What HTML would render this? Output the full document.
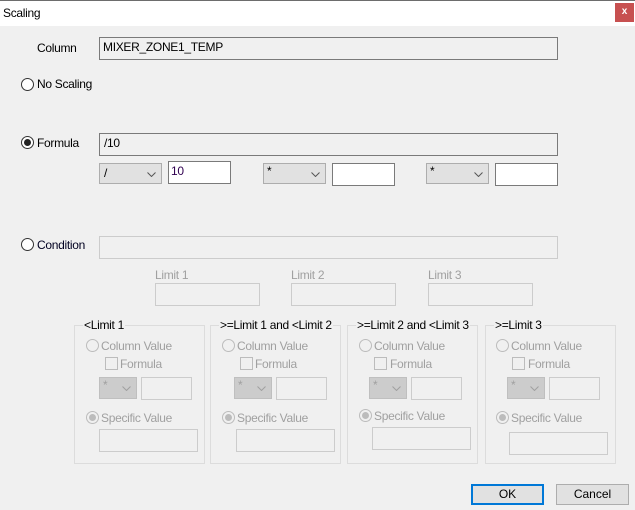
<!DOCTYPE html>
<html><head><style>
*{margin:0;padding:0;box-sizing:border-box}
body{width:635px;height:510px;background:#f0f0f0;font-family:"Liberation Sans",sans-serif;font-size:12px;position:relative;overflow:hidden;color:#000}
.a{position:absolute}
.t{position:absolute;white-space:nowrap;line-height:14px;letter-spacing:-0.3px}
.dis{color:#a0a0a0}
.box{position:absolute;border:1px solid #7a7a7a;background:#f0f0f0}
.dbox{position:absolute;border:1px solid #cccccc;background:#f0f0f0}
.wbox{position:absolute;border:1px solid #7a7a7a;background:#fff}
.combo{position:absolute;border:1px solid #adadad;background:#e1e1e1}
.dcombo{position:absolute;border:1px solid #bfbfbf;background:#cccccc}
.radio{position:absolute;width:13px;height:13px;border-radius:50%;border:1px solid #333;background:#fff}
.dradio{position:absolute;width:13px;height:13px;border-radius:50%;border:1px solid #bcbcbc;background:#f0f0f0}
.chk{position:absolute;width:13px;height:13px;border:1px solid #bcbcbc;background:#f0f0f0}
.grp{position:absolute;border:1px solid #dcdcdc}
.gt{position:absolute;top:-8px;left:8px;background:#f0f0f0;padding:0 1px;line-height:14px;white-space:nowrap;letter-spacing:-0.3px}
svg.ch{position:absolute;width:9px;height:5px}
</style></head><body>
<div class="a" style="left:0;top:0;width:635px;height:26px;background:#fff;border-top:1px solid #6d6d6d"></div>
<div class="t" style="left:3px;top:6px">Scaling</div>
<div class="a" style="left:615px;top:3px;width:19px;height:19px;background:#c75050;color:#fff;font-weight:bold;font-size:10px;text-align:center;line-height:18px">x</div>

<div class="t" style="left:37px;top:41px">Column</div>
<div class="box" style="left:99px;top:37px;width:459px;height:23px"></div>
<div class="t" style="left:103px;top:40px">MIXER_ZONE1_TEMP</div>

<div class="radio" style="left:21px;top:78px"></div>
<div class="t" style="left:37px;top:77px">No Scaling</div>

<div class="radio" style="left:21px;top:136px"></div>
<div class="a" style="left:24px;top:139px;width:7px;height:7px;border-radius:50%;background:#222"></div>
<div class="t" style="left:37px;top:136px">Formula</div>
<div class="box" style="left:99px;top:133px;width:459px;height:23px"></div>
<div class="t" style="left:104px;top:136px">/10</div>

<div class="combo" style="left:99px;top:163px;width:63px;height:21px"></div>
<div class="t" style="left:104px;top:166px">/</div>
<svg class="ch" style="left:147px;top:172px" viewBox="0 0 9 5"><polyline points="0.5,0.5 4.5,4.5 8.5,0.5" fill="none" stroke="#555" stroke-width="1"/></svg>
<div class="wbox" style="left:168px;top:161px;width:63px;height:23px"></div>
<div class="t" style="left:171px;top:164px;color:#300050">10</div>
<div class="combo" style="left:263px;top:163px;width:63px;height:21px"></div>
<div class="t" style="left:267px;top:164px">*</div>
<svg class="ch" style="left:311px;top:172px" viewBox="0 0 9 5"><polyline points="0.5,0.5 4.5,4.5 8.5,0.5" fill="none" stroke="#555" stroke-width="1"/></svg>
<div class="wbox" style="left:332px;top:163px;width:63px;height:23px"></div>
<div class="combo" style="left:426px;top:163px;width:63px;height:21px"></div>
<div class="t" style="left:430px;top:164px">*</div>
<svg class="ch" style="left:474px;top:172px" viewBox="0 0 9 5"><polyline points="0.5,0.5 4.5,4.5 8.5,0.5" fill="none" stroke="#555" stroke-width="1"/></svg>
<div class="wbox" style="left:495px;top:163px;width:63px;height:23px"></div>

<div class="radio" style="left:21px;top:238px"></div>
<div class="t" style="left:37px;top:238px;color:#000020">Condition</div>
<div class="dbox" style="left:99px;top:236px;width:459px;height:23px"></div>

<div class="t dis" style="left:155px;top:268px">Limit 1</div>
<div class="dbox" style="left:155px;top:283px;width:105px;height:23px"></div>
<div class="t dis" style="left:291px;top:268px">Limit 2</div>
<div class="dbox" style="left:291px;top:283px;width:105px;height:23px"></div>
<div class="t dis" style="left:428px;top:268px">Limit 3</div>
<div class="dbox" style="left:428px;top:283px;width:105px;height:23px"></div>

<div class="grp" style="left:74px;top:325px;width:131px;height:139px"><div class="gt">&lt;Limit 1</div></div>
<div class="grp" style="left:210px;top:325px;width:131px;height:139px"><div class="gt">&gt;=Limit 1 and &lt;Limit 2</div></div>
<div class="grp" style="left:347px;top:325px;width:131px;height:139px"><div class="gt">&gt;=Limit 2 and &lt;Limit 3</div></div>
<div class="grp" style="left:485px;top:325px;width:131px;height:139px"><div class="gt">&gt;=Limit 3</div></div>

<div class="dradio" style="left:86px;top:339px"></div><div class="t dis" style="left:101px;top:339px">Column Value</div>
<div class="chk" style="left:105px;top:357px"></div><div class="t dis" style="left:120px;top:357px">Formula</div>
<div class="dcombo" style="left:99px;top:377px;width:38px;height:22px"></div><div class="t dis" style="left:103px;top:378px">*</div>
<svg class="ch" style="left:122px;top:386px" viewBox="0 0 9 5"><polyline points="0.5,0.5 4.5,4.5 8.5,0.5" fill="none" stroke="#a0a0a0" stroke-width="1"/></svg>
<div class="dbox" style="left:141px;top:377px;width:51px;height:23px"></div>
<div class="dradio" style="left:86px;top:411px"></div><div class="a" style="left:89px;top:414px;width:7px;height:7px;border-radius:50%;background:#bcbcbc"></div><div class="t dis" style="left:101px;top:411px">Specific Value</div>
<div class="dbox" style="left:99px;top:429px;width:99px;height:23px"></div>

<div class="dradio" style="left:222px;top:339px"></div><div class="t dis" style="left:237px;top:339px">Column Value</div>
<div class="chk" style="left:240px;top:357px"></div><div class="t dis" style="left:255px;top:357px">Formula</div>
<div class="dcombo" style="left:234px;top:377px;width:38px;height:22px"></div><div class="t dis" style="left:238px;top:378px">*</div>
<svg class="ch" style="left:257px;top:386px" viewBox="0 0 9 5"><polyline points="0.5,0.5 4.5,4.5 8.5,0.5" fill="none" stroke="#a0a0a0" stroke-width="1"/></svg>
<div class="dbox" style="left:276px;top:377px;width:51px;height:23px"></div>
<div class="dradio" style="left:222px;top:411px"></div><div class="a" style="left:225px;top:414px;width:7px;height:7px;border-radius:50%;background:#bcbcbc"></div><div class="t dis" style="left:237px;top:411px">Specific Value</div>
<div class="dbox" style="left:236px;top:429px;width:99px;height:23px"></div>

<div class="dradio" style="left:359px;top:339px"></div><div class="t dis" style="left:374px;top:339px">Column Value</div>
<div class="chk" style="left:374px;top:357px"></div><div class="t dis" style="left:390px;top:357px">Formula</div>
<div class="dcombo" style="left:369px;top:377px;width:38px;height:22px"></div><div class="t dis" style="left:373px;top:378px">*</div>
<svg class="ch" style="left:392px;top:386px" viewBox="0 0 9 5"><polyline points="0.5,0.5 4.5,4.5 8.5,0.5" fill="none" stroke="#a0a0a0" stroke-width="1"/></svg>
<div class="dbox" style="left:411px;top:377px;width:51px;height:23px"></div>
<div class="dradio" style="left:359px;top:409px"></div><div class="a" style="left:362px;top:412px;width:7px;height:7px;border-radius:50%;background:#bcbcbc"></div><div class="t dis" style="left:374px;top:409px">Specific Value</div>
<div class="dbox" style="left:372px;top:427px;width:99px;height:23px"></div>

<div class="dradio" style="left:496px;top:339px"></div><div class="t dis" style="left:511px;top:339px">Column Value</div>
<div class="chk" style="left:512px;top:357px"></div><div class="t dis" style="left:528px;top:357px">Formula</div>
<div class="dcombo" style="left:507px;top:377px;width:38px;height:22px"></div><div class="t dis" style="left:511px;top:378px">*</div>
<svg class="ch" style="left:530px;top:386px" viewBox="0 0 9 5"><polyline points="0.5,0.5 4.5,4.5 8.5,0.5" fill="none" stroke="#a0a0a0" stroke-width="1"/></svg>
<div class="dbox" style="left:549px;top:377px;width:51px;height:23px"></div>
<div class="dradio" style="left:496px;top:411px"></div><div class="a" style="left:499px;top:414px;width:7px;height:7px;border-radius:50%;background:#bcbcbc"></div><div class="t dis" style="left:511px;top:411px">Specific Value</div>
<div class="dbox" style="left:509px;top:432px;width:99px;height:23px"></div>

<div class="a" style="left:471px;top:484px;width:73px;height:21px;border:2px solid #0078d7;background:#e1e1e1;text-align:center;line-height:17px">OK</div>
<div class="a" style="left:556px;top:484px;width:73px;height:21px;border:1px solid #adadad;background:#e1e1e1;text-align:center;line-height:19px">Cancel</div>
</body></html>
